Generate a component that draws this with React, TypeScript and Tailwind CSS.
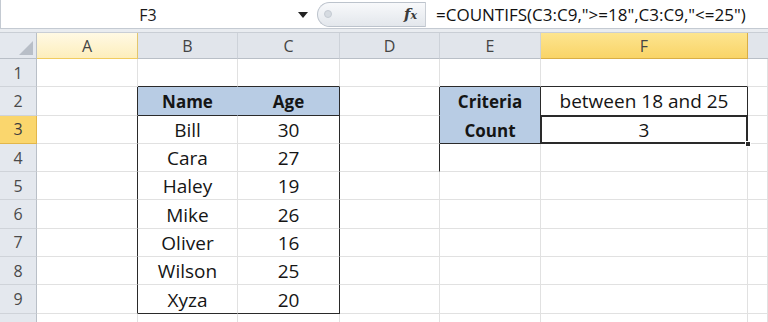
import React from 'react';

const COLS = "grid grid-cols-[37px_101px_100px_102px_100px_101px_207px_1fr]";

const rMap: Record<string, string> = {
    l: "border-r-[#e1e1e1]",
    d: "border-r-[#2a2a2a]",
    blue: "border-r-[#b8cce4]",
};
const bMap: Record<string, string> = {
    l: "border-b-[#e1e1e1]",
    d: "border-b-[#2a2a2a]",
    blue: "border-b-[#b8cce4]",
};

type CellProps = {
    r?: string;
    b?: string;
    bg?: string;
    bold?: boolean;
    children?: React.ReactNode;
};

const Cell = ({ r = "l", b = "l", bg = "bg-white", bold = false, children }: CellProps) => (
    <div className={`border-r border-b ${rMap[r]} ${bMap[b]} ${bg} flex items-center justify-center pt-[2px] text-[#151515] leading-none whitespace-nowrap overflow-hidden ${bold ? "font-bold text-[17px]" : "text-[19px]"}`}>
        {children}
    </div>
);

const RowHead = ({ n, selected = false }: { n?: number; selected?: boolean }) => (
    <div className={`border-r border-b flex items-center justify-center text-[16px] leading-none ${selected ? "bg-[#fad66d] border-r-[#e2b64a] border-b-[#e2b64a] text-[#3d3d3d]" : "bg-[#e4e8ee] border-r-[#b9bfc7] border-b-[#cfd3d9] text-[#4a4a4a]"}`}>
        {n}
    </div>
);

const data = [
    ["Bill", "30"],
    ["Cara", "27"],
    ["Haley", "19"],
    ["Mike", "26"],
    ["Oliver", "16"],
    ["Wilson", "25"],
    ["Xyza", "20"],
];

export default function App() {
    return (
        <div className="w-[768px] h-[322px] overflow-hidden bg-white font-['Open_Sans','Liberation_Sans',sans-serif]">
            {/* formula bar */}
            <div className="h-[29px] flex items-center border-b border-[#c4cad2] border-l border-l-[#c4cad2]">
                <div className="w-[294px] text-center text-[16px] text-[#1a1a1a] pt-[2px]">F3</div>
                <svg width="10" height="6" viewBox="0 0 10 6" className="ml-[3px] mt-[1px]">
                    <path d="M0 0 H10 L5 6 Z" fill="#222" />
                </svg>
                <div className="ml-[9px] h-[25px] w-[108px] rounded-l-full border border-r-0 border-[#bcc3cc] bg-gradient-to-b from-[#f8f9fb] to-[#e3e7ec] flex items-center pl-[6px] pr-[8px]">
                    <div className="w-[8px] h-[8px] rounded-full bg-[#d6dbe1] border border-[#c5cbd3]" />
                    <span className="ml-auto font-['DejaVu_Serif',serif] italic font-bold text-[15px] text-[#3a3a3a] leading-none">
                        f<span className="text-[11px]">x</span>
                    </span>
                </div>
                <div className="w-px h-[25px] bg-[#c9ced5]" />
                <div className="ml-[10px] text-[17px] text-[#111] pt-[2px] whitespace-nowrap">
                    =COUNTIFS(C3:C9,"&gt;=18",C3:C9,"&lt;=25")
                </div>
            </div>
            <div className="h-[4px] bg-[#e9ecf0] border-b border-[#c9ced5]" />

            {/* column headers */}
            <div className={`${COLS} h-[26px] text-[16px] text-[#444] leading-none`}>
                <div className="relative bg-[#e4e8ee] border-r border-b border-[#b9bfc7]">
                    <svg width="14" height="14" viewBox="0 0 14 14" className="absolute right-[3px] bottom-[3px]">
                        <path d="M14 0 V14 H0 Z" fill="#b8bec7" />
                    </svg>
                </div>
                <div className="flex items-center justify-center bg-gradient-to-b from-[#fff9e4] to-[#fdeebc] border-r border-b border-r-[#e3c66c] border-b-[#f1cc5f]">A</div>
                <div className="flex items-center justify-center bg-[#e1e5eb] border-r border-b border-r-[#cdd2d9] border-b-[#b9bfc7]">B</div>
                <div className="flex items-center justify-center bg-[#e1e5eb] border-r border-b border-r-[#cdd2d9] border-b-[#b9bfc7]">C</div>
                <div className="flex items-center justify-center bg-[#e1e5eb] border-r border-b border-r-[#cdd2d9] border-b-[#b9bfc7]">D</div>
                <div className="flex items-center justify-center bg-[#e1e5eb] border-r border-b border-r-[#cdd2d9] border-b-[#b9bfc7]">E</div>
                <div className="flex items-center justify-center bg-gradient-to-b from-[#fde58f] to-[#f9d467] border-r border-b border-r-[#d9ae45] border-b-[#d9ae45]">F</div>
                <div className="bg-[#e1e5eb] border-b border-[#b9bfc7]" />
            </div>

            {/* row 1 */}
            <div className={`${COLS} h-[28.3px]`}>
                <RowHead n={1} />
                <Cell />
                <Cell b="d" />
                <Cell b="d" />
                <Cell />
                <Cell b="d" />
                <Cell b="d" />
                <Cell />
            </div>

            {/* row 2 */}
            <div className={`${COLS} h-[28.3px]`}>
                <RowHead n={2} />
                <Cell r="d" />
                <Cell r="blue" b="d" bg="bg-[#b8cce4]" bold>Name</Cell>
                <Cell r="d" b="d" bg="bg-[#b8cce4]" bold>Age</Cell>
                <Cell r="d" />
                <Cell r="d" b="blue" bg="bg-[#b8cce4]" bold>Criteria</Cell>
                <Cell r="d" b="d">between 18 and 25</Cell>
                <Cell />
            </div>

            {data.map(([name, age], i) => {
                const last = i === data.length - 1;
                return (
                    <div key={name} className={`${COLS} h-[28.3px]`}>
                        <RowHead n={i + 3} selected={i === 0} />
                        <Cell r="d" />
                        <Cell b={last ? "d" : "l"}>{name}</Cell>
                        <Cell r="d" b={last ? "d" : "l"}>{age}</Cell>
                        <Cell r={i < 2 ? "d" : "l"} />
                        {i === 0 ? (
                            <Cell r="d" b="d" bg="bg-[#b8cce4]" bold>Count</Cell>
                        ) : (
                            <Cell />
                        )}
                        {i === 0 ? (
                            <div className="relative border-r border-b border-r-[#2a2a2a] border-b-[#2a2a2a] bg-white flex items-center justify-center pt-[2px] text-[19px] text-[#151515] leading-none">
                                3
                                <div className="absolute -left-px -top-px -right-px -bottom-px border-2 border-[#2a2a2a]" />
                                <div className="absolute -right-[4px] -bottom-[4px] w-[6px] h-[6px] bg-[#2a2a2a] border border-white" />
                            </div>
                        ) : (
                            <Cell />
                        )}
                        <Cell />
                    </div>
                );
            })}

            {/* row 10 (only its top edge is in view) */}
            <div className={`${COLS} h-[28.3px]`}>
                <RowHead />
                <Cell />
                <Cell />
                <Cell />
                <Cell />
                <Cell />
                <Cell />
                <Cell />
            </div>
        </div>
    );
}
